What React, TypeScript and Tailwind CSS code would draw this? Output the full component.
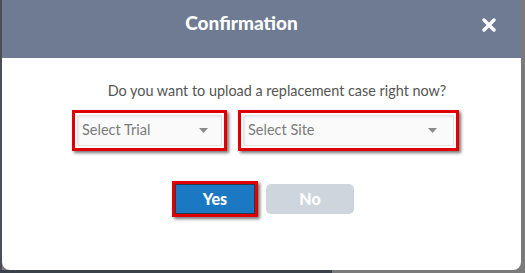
import React from 'react';

const Caret: React.FC = () => (
  <svg width="9" height="5" viewBox="0 0 9 5" className="shrink-0">
    <path d="M0 0 L9 0 L4.5 5 Z" fill="#8a8a8a" />
  </svg>
);

const SelectBox: React.FC<{ label: string; width: string; caretPad: string }> = ({ label, width, caretPad }) => (
  <div className={`${width} h-[41px] border-[3px] border-[#e00000] shadow-[2px_2px_3px_rgba(0,0,0,0.55)] p-[2px]`}>
    <div className={`h-full flex items-center justify-between pl-[4px] ${caretPad} bg-[#fafafa] border border-[#e4e4e4] shadow-[inset_1px_1px_2px_rgba(0,0,0,0.08)]`}>
      <span className="text-[14.5px] text-[#7a7a7a] leading-none">{label}</span>
      <Caret />
    </div>
  </div>
);

export default function App() {
  return (
    <div className="w-[525px] h-[273px] flex flex-col bg-[#7b7b7b] overflow-hidden font-['Lato','Liberation_Sans',sans-serif]">
      <div className="flex flex-1">
        <div className="w-[2px] bg-[#4a4f57]" />
        <div className="w-[519px] h-[270px] bg-white rounded-b-[8px] flex flex-col">
          {/* header */}
          <div className="h-[58px] bg-[#6e7b93] relative pt-[10px]">
            <h2 className="w-full text-center text-white font-black text-[19px] leading-[26px] pr-[40px]">Confirmation</h2>
            <svg
              width="14"
              height="14"
              viewBox="0 0 14 14"
              className="absolute right-[25px] top-[18px]"
            >
              <path d="M2 2 L12 12 M12 2 L2 12" stroke="white" strokeWidth="3.4" strokeLinecap="round" />
            </svg>
          </div>

          {/* body */}
          <p className="mt-[24px] text-center text-[14.4px] leading-[18px] text-[#555] pl-[31px]">
            Do you want to upload a replacement case right now?
          </p>

          <div className="mt-[10px] ml-[70px] flex gap-[11px]">
            <SelectBox label="Select Trial" width="w-[155px]" caretPad="pr-[13px]" />
            <SelectBox label="Select Site" width="w-[221px]" caretPad="pr-[16px]" />
          </div>

          <div className="mt-[30px] ml-[170px] flex items-center gap-[8px]">
            <div className="w-[86px] h-[36px] border-[3px] border-[#e00000] shadow-[2px_2px_3px_rgba(0,0,0,0.55)]">
              <button className="w-full h-full bg-[#1b78c2] border border-[#2a3a4a] text-white font-black text-[16px]">
                Yes
              </button>
            </div>
            <button className="w-[88px] h-[30px] rounded-[5px] bg-[#cfd5dd] text-white font-black text-[16px]">
              No
            </button>
          </div>
        </div>
        <div className="w-[4px] bg-[#7b7b7b]" />
      </div>
      <div className="h-[3px] flex">
        <div className="w-[332px] bg-[#3b414a]" />
        <div className="flex-1 bg-[#7b7b7b]" />
      </div>
    </div>
  );
}
